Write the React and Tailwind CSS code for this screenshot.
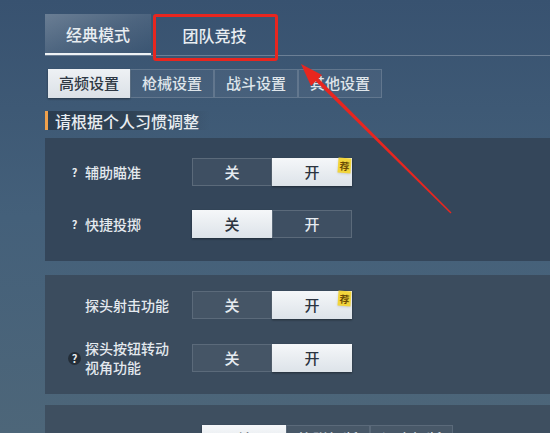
import React from "react";

const Badge = () => (
  <span className="absolute right-[1px] top-0 w-[13px] h-[15px] bg-[#f2d53c] text-[#6a4b05] text-[10px] leading-[15px] text-center font-bold rotate-[4deg] shadow-sm">
    荐
  </span>
);

const Cell = ({ label, active, badge, w = "w-[80px]" }) => (
  <div
    className={`relative ${w} h-[28px] flex items-center justify-center text-[15px] font-medium ${
      active
        ? "bg-gradient-to-b from-[#f5f7f9] to-[#dde3e9] text-[#2c3440] shadow-[0_1px_2px_rgba(0,0,0,0.4)]"
        : "bg-white/5 border border-[#5b6a7a] text-[#e6ebf0]"
    }`}
  >
    {label}
    {badge && <Badge />}
  </div>
);

const Row = ({ q, dot, label, children, className = "" }) => (
  <div className={`flex items-center h-[28px] pl-[23px] ${className}`}>
    <div className="w-[17px] flex items-center">
      {q && (
        <span
          className={`w-[13px] h-[13px] rounded-full flex items-center justify-center text-[11px] font-bold text-[#e8edf1] ${
            dot ? "bg-black/40" : ""
          }`}
        >
          ?
        </span>
      )}
    </div>
    <div className="w-[107px] text-[14px] leading-[19px] font-medium text-[#e4e9ee]">{label}</div>
    <div className="flex">{children}</div>
  </div>
);

export default function App() {
  return (
    <div className="relative w-[550px] h-[433px] overflow-hidden bg-gradient-to-b from-[#385270] via-[#44607a] to-[#4d6679] font-['Noto_Sans_CJK_SC',sans-serif]">
      <div className="pl-[45px] pt-[14px]">
        {/* mode tabs */}
        <div className="flex h-[42px] border-b border-white/25">
          <div className="w-[106px] flex items-center justify-center text-[16px] font-medium text-[#e8edf1] bg-gradient-to-br from-white/25 via-white/10 to-white/0 border-b-2 border-[#eef2f5]">
            经典模式
          </div>
          <div className="w-[127px] flex items-center justify-center text-[16px] font-medium text-[#e8edf1]">
            团队竞技
          </div>
        </div>

        {/* sub tabs */}
        <div className="mt-[13px] ml-[3px] flex h-[29px]">
          <div className="w-[82px] flex items-center justify-center text-[15px] font-medium bg-gradient-to-b from-[#eef1f4] to-[#dbe1e7] text-[#2e3844] shadow-[0_1px_2px_rgba(0,0,0,0.4)]">
            高频设置
          </div>
          {["枪械设置", "战斗设置", "其他设置"].map((t) => (
            <div
              key={t}
              className="w-[84px] flex items-center justify-center text-[15px] font-medium text-[#dfe5ea] border border-white/15 bg-white/5"
            >
              {t}
            </div>
          ))}
        </div>

        {/* section title */}
        <div className="mt-[13px] h-[19px] w-[165px] flex items-center border-l-[3px] border-[#f0a14c] pl-[7px] bg-gradient-to-r from-[#2b3d50] via-[#2f4255] to-transparent text-[16px] font-medium text-[#e8edf1]">
          请根据个人习惯调整
        </div>

        {/* panel 1 */}
        <div className="mt-[8px] h-[123px] bg-[#34465a] pt-[20px] flex flex-col gap-[24px]">
          <Row q label="辅助瞄准">
            <Cell label="关" />
            <Cell label="开" active badge />
          </Row>
          <Row q label="快捷投掷">
            <Cell label="关" active />
            <Cell label="开" />
          </Row>
        </div>

        {/* panel 2 */}
        <div className="mt-[14px] h-[119px] bg-[#3b4c5e] pt-[16px] flex flex-col gap-[24px]">
          <Row label="探头射击功能">
            <Cell label="关" />
            <Cell label="开" active badge />
          </Row>
          <Row q dot label={<>探头按钮转动<br />视角功能</>} className="mt-[1px]">
            <Cell label="关" />
            <Cell label="开" active />
          </Row>
        </div>

        {/* panel 3 */}
        <div className="mt-[11px] h-[60px] bg-[#3e4f60] pt-[20px]">
          <div className="flex items-center h-[28px] pl-[27px]">
            <div className="w-[18px]">
              <span className="w-[13px] h-[13px] rounded-full flex items-center justify-center text-[11px] font-bold text-[#e8edf1] bg-black/40">
                ?
              </span>
            </div>
            <div className="w-[112px] text-[14px] font-medium text-[#e4e9ee]">开火打断换弹</div>
            <div className="flex">
              <Cell label="关" active w="w-[84px]" />
              <Cell label="换弹打断" w="w-[84px]" />
              <Cell label="混合打断" w="w-[83px]" />
            </div>
          </div>
        </div>
      </div>

      {/* annotation: red box */}
      <div className="absolute left-[153px] top-[14px] w-[125px] h-[47px] border-[3px] border-[#e8261f] rounded-[3px]" />

      {/* annotation: arrow */}
      <svg className="absolute left-0 top-0" width="550" height="433" viewBox="0 0 550 433">
        <polygon points="301,64 322,75 311,86" fill="#e8261f" />
        <polygon points="318,78 315.2,80.8 450.5,213.5 451.5,212.5" fill="#e8261f" />
      </svg>
    </div>
  );
}
